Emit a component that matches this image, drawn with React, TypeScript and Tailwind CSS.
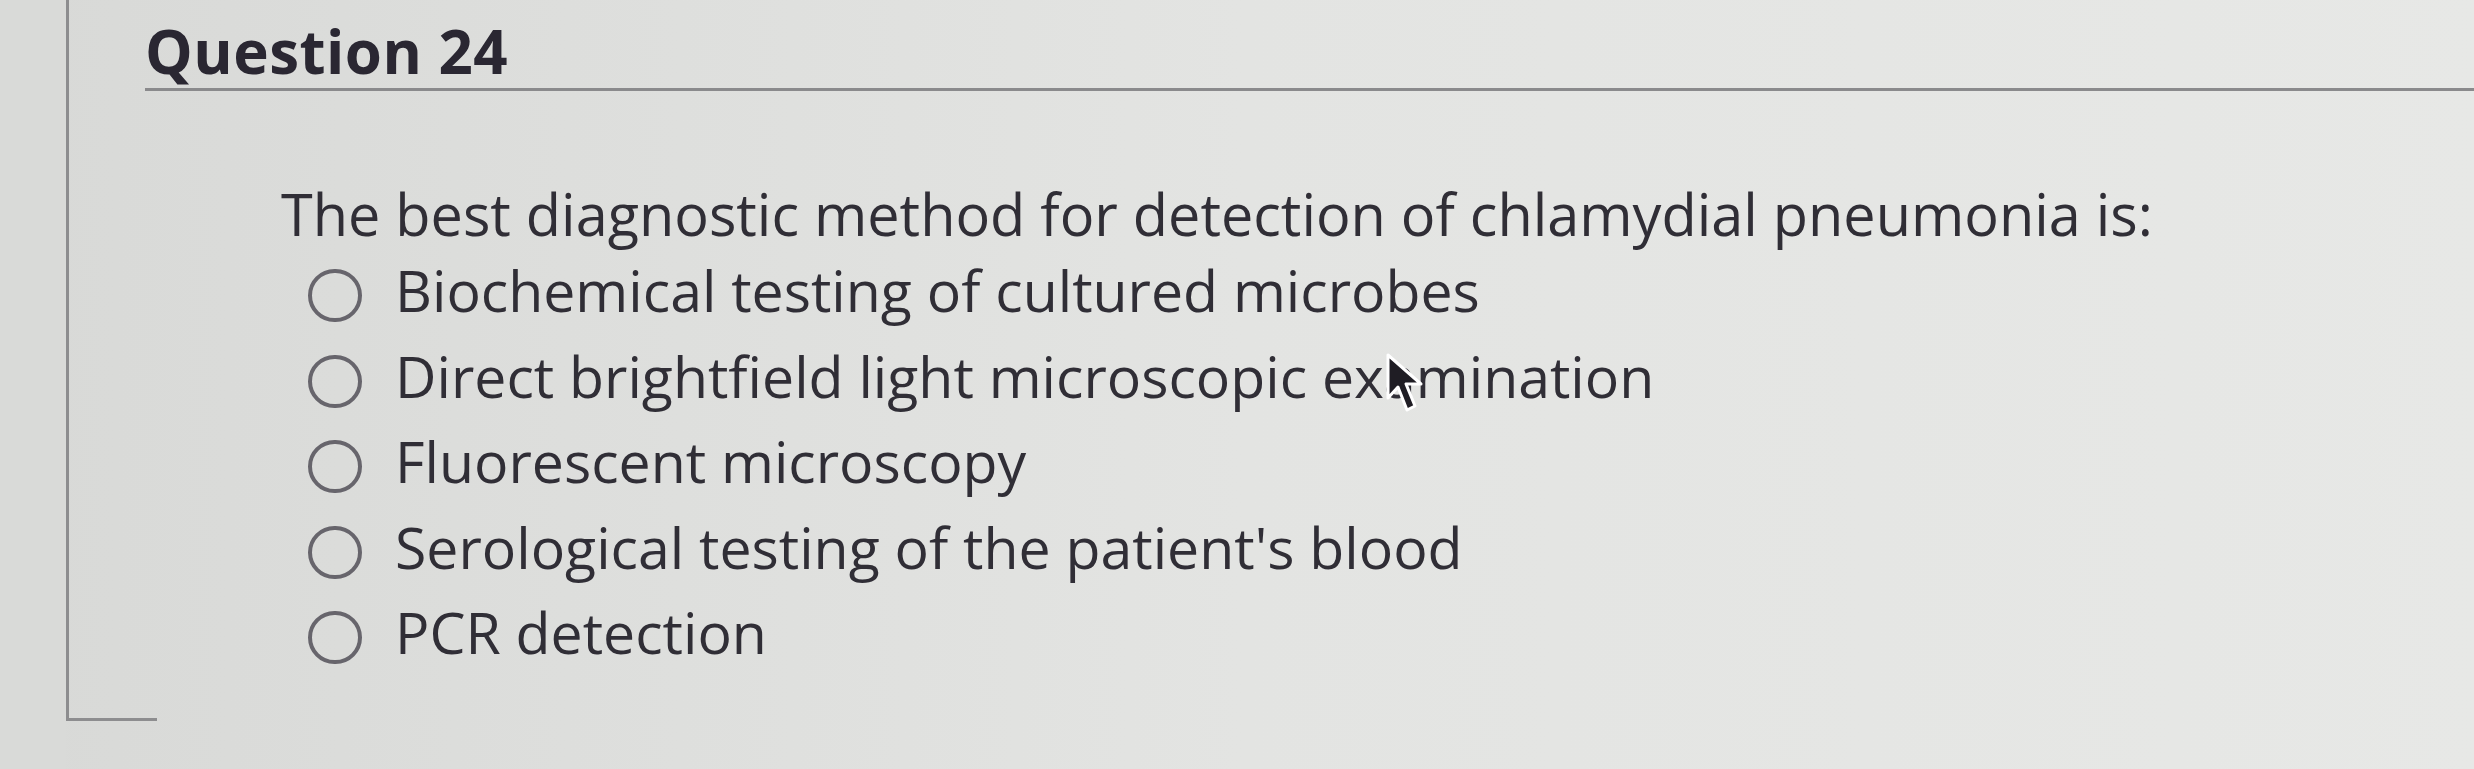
import React from 'react';

const options = [
  'Biochemical testing of cultured microbes',
  'Direct brightfield light microscopic examination',
  'Fluorescent microscopy',
  "Serological testing of the patient's blood",
  'PCR detection',
];

const Cursor: React.FC = () => (
  <svg width="42" height="64" viewBox="0 0 42 64" className="absolute left-[1384px] top-[352px]">
    <path
      d="M4 3 L4 46 L14 35 L23 58 L31 54 L22 32 L37 32 Z"
      fill="#1f1d24"
      stroke="#ffffff"
      strokeWidth="3"
      strokeLinejoin="round"
    />
  </svg>
);

const Radio: React.FC = () => (
  <span className="mt-[21px] block h-[53px] w-[54px] shrink-0 rounded-full border-4 border-[#67656c]" />
);

export default function App() {
  return (
    <div
      className="relative flex h-[769px] w-full overflow-hidden bg-gradient-to-r from-[#d8d9d7] via-[#e3e4e2] to-[#e7e8e6] text-[#302e36]"
      style={{ fontFamily: '"Open Sans", "Liberation Sans", sans-serif' }}
    >
      {/* left margin strip */}
      <div className="w-[66px] shrink-0 bg-[#d9dad8]" />

      <div className="flex flex-1 flex-col">
        <div className="flex h-[718px] flex-col border-l-[3px] border-[#8d8d8f]">
          {/* heading */}
          <div className="ml-[76px] border-b-[3px] border-[#8a8a8c] pt-[21px] pb-[7px]">
            <h2 className="text-[60px] font-bold leading-[60px] tracking-[0.5px] text-[#2a2732]">Question 24</h2>
          </div>

          {/* question body */}
          <div className="ml-[212px] mt-[89px] flex flex-col">
            <p className="text-[57.6px] leading-[68px]">
              The best diagnostic method for detection of chlamydial pneumonia is:
            </p>
            <ul className="ml-[27px] flex flex-col">
              {options.map((opt) => (
                <li key={opt} className="flex items-start gap-[33px]">
                  <Radio />
                  <span className="text-[57.2px] leading-[85.5px]">{opt}</span>
                </li>
              ))}
            </ul>
          </div>
        </div>
        <div className="h-[3px] w-[91px] bg-[#8d8d8f]" />
      </div>

      <Cursor />
    </div>
  );
}
